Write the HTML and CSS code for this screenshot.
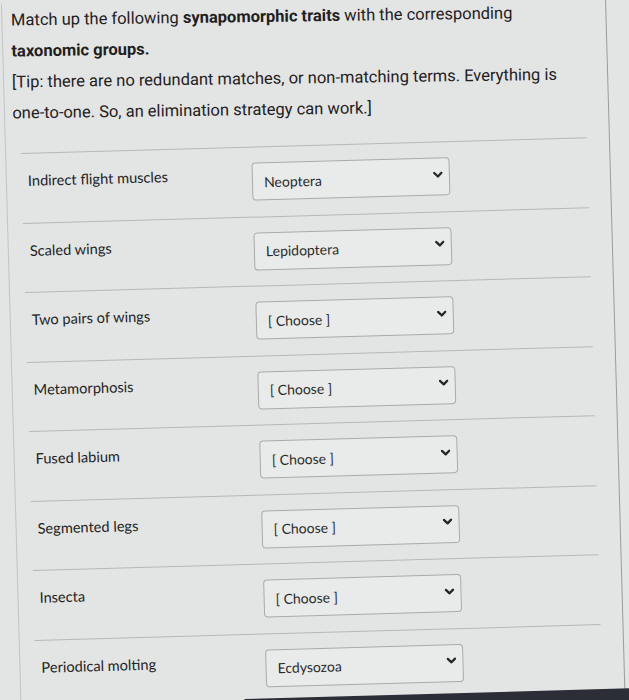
FILE: index.html
```html
<!DOCTYPE html>
<html lang="en">
<head>
<meta charset="utf-8">
<title>Matching question</title>
<link rel="stylesheet" href="styles.css">
</head>
<body>
<div class="screen">
  <div class="quiz">
    <div class="prompt">
      <p>Match up the following <strong>synapomorphic traits</strong> with the corresponding <strong>taxonomic groups.</strong></p>
      <p>[Tip: there are no redundant matches, or non-matching terms. Everything is one-to-one. So, an elimination strategy can work.]</p>
    </div>
    <div class="matches">
      <div class="match">
        <div class="term">Indirect flight muscles</div>
        <div class="select"><span>Neoptera</span><svg class="chev" viewBox="0 0 10 7" width="10" height="7"><path d="M1.4 1.4 L5 5 L8.6 1.4"/></svg></div>
      </div>
      <div class="match">
        <div class="term">Scaled wings</div>
        <div class="select"><span>Lepidoptera</span><svg class="chev" viewBox="0 0 10 7" width="10" height="7"><path d="M1.4 1.4 L5 5 L8.6 1.4"/></svg></div>
      </div>
      <div class="match">
        <div class="term">Two pairs of wings</div>
        <div class="select"><span>[ Choose ]</span><svg class="chev" viewBox="0 0 10 7" width="10" height="7"><path d="M1.4 1.4 L5 5 L8.6 1.4"/></svg></div>
      </div>
      <div class="match">
        <div class="term">Metamorphosis</div>
        <div class="select"><span>[ Choose ]</span><svg class="chev" viewBox="0 0 10 7" width="10" height="7"><path d="M1.4 1.4 L5 5 L8.6 1.4"/></svg></div>
      </div>
      <div class="match">
        <div class="term">Fused labium</div>
        <div class="select"><span>[ Choose ]</span><svg class="chev" viewBox="0 0 10 7" width="10" height="7"><path d="M1.4 1.4 L5 5 L8.6 1.4"/></svg></div>
      </div>
      <div class="match">
        <div class="term">Segmented legs</div>
        <div class="select"><span>[ Choose ]</span><svg class="chev" viewBox="0 0 10 7" width="10" height="7"><path d="M1.4 1.4 L5 5 L8.6 1.4"/></svg></div>
      </div>
      <div class="match">
        <div class="term">Insecta</div>
        <div class="select"><span>[ Choose ]</span><svg class="chev" viewBox="0 0 10 7" width="10" height="7"><path d="M1.4 1.4 L5 5 L8.6 1.4"/></svg></div>
      </div>
      <div class="match">
        <div class="term">Periodical molting</div>
        <div class="select"><span>Ecdysozoa</span><svg class="chev" viewBox="0 0 10 7" width="10" height="7"><path d="M1.4 1.4 L5 5 L8.6 1.4"/></svg></div>
      </div>
    </div>
    <div class="footer"><div class="bar"></div></div>
  </div>
</div>
</body>
</html>
```

FILE: styles.css
```css
html, body {
  margin: 0;
  padding: 0;
  height: 700px;
  overflow: hidden;
  background: #e3e5e5;
}

.screen {
  width: 629px;
  height: 760px;
  transform: rotate(-1.6deg);
  transform-origin: 315px 400px;
}

.quiz {
  margin-left: 12px;
  width: 603px;
  height: 760px;
  border-left: 1px solid #c2c4c4;
  border-right: 1px solid #9a9c9c;
  background: #e3e5e5;
  color: #1f2020;
}

.prompt {
  margin-top: -4px;
  padding: 0 0 0 8px;
  width: 560px;
  font-family: Roboto, "Liberation Sans", sans-serif;
  font-size: 16.5px;
  line-height: 31px;
  transform: rotate(0.8deg);
  transform-origin: 0 50%;
}

.prompt p {
  margin: 0;
}

.prompt strong {
  font-weight: 700;
}

.matches {
  margin: 25px 0 0 15px;
  width: 566px;
}

.match {
  box-sizing: border-box;
  height: 69.5px;
  border-top: 1px solid #b6b8b8;
  display: flex;
  align-items: flex-start;
}

.match:last-child {
  height: 65.5px;
}

.term {
  box-sizing: border-box;
  flex: 0 0 230px;
  padding: 17px 0 0 6px;
  font-family: Lato, "Liberation Sans", sans-serif;
  font-size: 14.6px;
  line-height: 20px;
  color: #222323;
}

.select {
  box-sizing: border-box;
  margin-top: 15px;
  width: 198px;
  height: 38px;
  border: 1px solid #a9abab;
  border-radius: 4px;
  background: #e9ebeb;
  display: flex;
  align-items: center;
  justify-content: space-between;
  padding: 0 6px 0 11px;
  font-family: Lato, "Liberation Sans", sans-serif;
  font-size: 14px;
  color: #2a2b2b;
}

.chev {
  display: block;
  margin-top: -4px;
}

.chev path {
  fill: none;
  stroke: #262727;
  stroke-width: 2.3;
  stroke-linecap: round;
  stroke-linejoin: round;
}

.footer {
  display: flex;
  justify-content: flex-end;
}

.bar {
  width: 420px;
  height: 60px;
  margin-right: -40px;
  background: #2b2e36;
}
```
